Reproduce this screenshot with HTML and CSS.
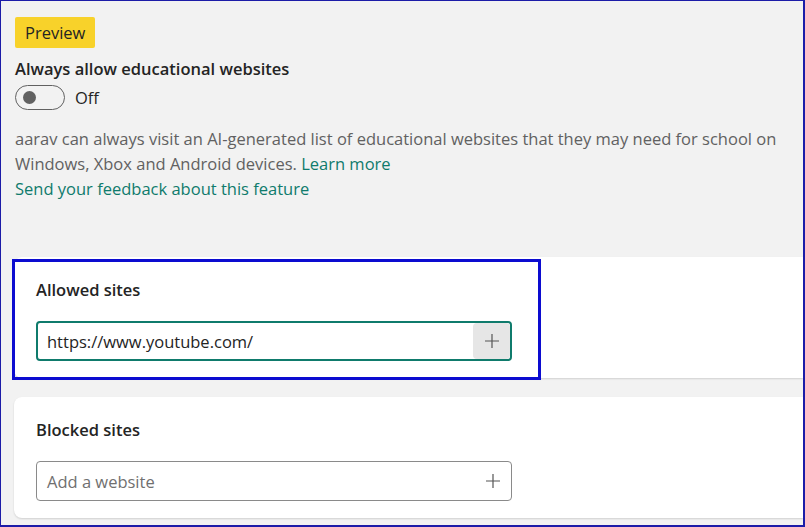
FILE: index.html
```html
<!DOCTYPE html>
<html lang="en">
<head>
    <meta charset="UTF-8">
    <meta name="viewport" content="width=device-width, initial-scale=1.0">
    <title>Content filters</title>
    <link rel="stylesheet" href="styles.css">
</head>
<body>
    <div class="frame">
        <div class="intro">
            <span class="badge">Preview</span>
            <div class="setting-title">Always allow educational websites</div>
            <div class="toggle-row">
                <span class="toggle"><span class="knob"></span></span>
                <span class="toggle-label">Off</span>
            </div>
            <p class="desc">
                aarav can always visit an AI-generated list of educational websites that they may need for school on<br>
                Windows, Xbox and Android devices. <a href="#" class="link">Learn more</a><br>
                <a href="#" class="link">Send your feedback about this feature</a>
            </p>
        </div>

        <div class="card highlighted">
            <div class="card-title">Allowed sites</div>
            <div class="site-input focused">
                <span class="value">https://www.youtube.com/</span>
                <span class="add-btn">
                    <svg width="16" height="16" viewBox="0 0 16 16"><path d="M8 1v14M1 8h14" stroke="#555" stroke-width="1.2" fill="none"/></svg>
                </span>
            </div>
        </div>

        <div class="card">
            <div class="card-title">Blocked sites</div>
            <div class="site-input">
                <span class="placeholder">Add a website</span>
                <span class="add-btn">
                    <svg width="16" height="16" viewBox="0 0 16 16"><path d="M8 1v14M1 8h14" stroke="#555" stroke-width="1.2" fill="none"/></svg>
                </span>
            </div>
        </div>
    </div>
</body>
</html>
```

FILE: styles.css
```css
*, *::before, *::after {
    box-sizing: border-box;
}

body {
    margin: 0;
    font-family: "Open Sans", "Noto Sans", sans-serif;
    font-size: 16.5px;
    color: #242424;
    background-color: #f2f2f2;
}

.frame {
    height: 527px;
    border: 1px solid #1c1ca8;
    border-right-width: 2px;
    border-bottom-width: 2px;
    overflow: hidden;
}

.intro {
    padding: 16px 14px 0 14px;
    height: 256px;
}

.badge {
    display: inline-block;
    background-color: #f8d22a;
    padding: 5px 10px;
    height: 31px;
    border-radius: 2px;
    line-height: 21px;
}

.setting-title {
    margin-top: 10px;
    font-weight: 600;
    line-height: 22px;
}

.toggle-row {
    display: flex;
    align-items: center;
    margin-top: 5px;
    gap: 10px;
}

.toggle {
    width: 50px;
    height: 25px;
    border: 1px solid #616161;
    border-radius: 13px;
    display: flex;
    align-items: center;
    padding-left: 7px;
}

.knob {
    width: 13px;
    height: 13px;
    border-radius: 50%;
    background-color: #616161;
}

.desc {
    margin: 16px 0 0 0;
    line-height: 25px;
    color: #616161;
}

.link {
    color: #0f7b6c;
    text-decoration: none;
}

.card {
    position: relative;
    margin-left: 13px;
    background: #fff;
    border-radius: 8px 0 0 8px;
    box-shadow: 0 1px 2px rgba(0, 0, 0, 0.14);
    padding: 22px 0 16px 22px;
    height: 121px;
}

.card + .card {
    margin-top: 19px;
}

.highlighted::after {
    content: "";
    position: absolute;
    left: -2px;
    top: 2px;
    width: 529px;
    height: 121px;
    border: 3px solid #0c0cd0;
}

.card-title {
    font-weight: 600;
    line-height: 22px;
}

.site-input {
    margin-top: 20px;
    width: 476px;
    height: 40px;
    border: 1px solid #8a8a8a;
    border-radius: 4px;
    display: flex;
    align-items: center;
    justify-content: space-between;
    padding-left: 10px;
}

.site-input.focused {
    border: 2px solid #0f7b6c;
    padding-left: 9px;
}

.placeholder {
    color: #707070;
}

.add-btn {
    width: 37px;
    height: 36px;
    display: flex;
    align-items: center;
    justify-content: center;
    border-radius: 4px;
}

.focused .add-btn {
    background-color: #e6e6e6;
}
```
